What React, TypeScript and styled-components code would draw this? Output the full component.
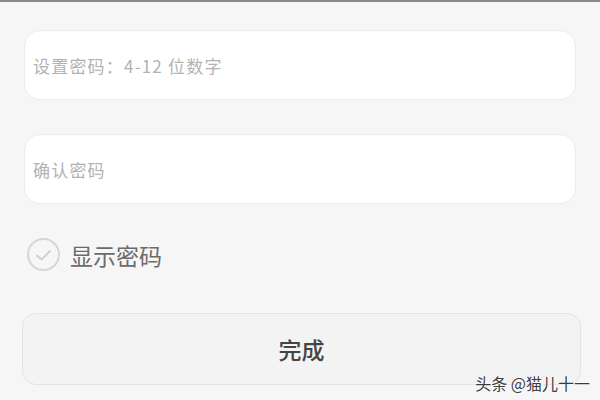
import React from 'react';
import styled, { createGlobalStyle } from 'styled-components';

const GlobalStyle = createGlobalStyle`
  html, body {
    margin: 0;
    padding: 0;
    background: #f6f6f6;
  }
  body {
    font-family: "Noto Sans CJK SC", "Noto Sans", sans-serif;
  }
`;

const Screen = styled.div`
  position: relative;
  width: 600px;
  height: 400px;
  overflow: hidden;
  background: #f6f6f6;
  border-top: 2px solid #8a8a8a;
  box-sizing: border-box;
  display: flex;
  flex-direction: column;
  padding: 28px 24px 0 24px;
`;

const Field = styled.div<{ $gap: number }>`
  height: 70px;
  margin-bottom: ${(p) => p.$gap}px;
  background: #ffffff;
  border: 1.5px solid #ebebeb;
  border-radius: 16px;
  display: flex;
  align-items: center;
  padding-left: 8px;
  box-sizing: border-box;
  font-size: 17px;
  letter-spacing: 1.2px;
  color: #b2b2b2;
`;

const CheckRow = styled.div`
  display: flex;
  align-items: center;
  gap: 10px;
  height: 33px;
  margin-bottom: 42px;
  margin-left: 3px;
`;

const CheckCircle = styled.div`
  width: 33px;
  height: 33px;
  border-radius: 50%;
  border: 2px solid #d6d6d6;
  box-sizing: border-box;
  display: flex;
  align-items: center;
  justify-content: center;
`;

const CheckLabel = styled.span`
  font-size: 23px;
  color: #6c6c6c;
`;

const DoneButton = styled.div`
  height: 72px;
  margin: 0 -5px 0 -2px;
  background: #f3f3f3;
  border: 1.5px solid #e4e4e4;
  border-radius: 14px;
  box-sizing: border-box;
  display: flex;
  align-items: center;
  justify-content: center;
  font-size: 23px;
  font-weight: 500;
  color: #444444;
`;

const Watermark = styled.div`
  position: absolute;
  right: 10px;
  bottom: 5px;
  font-size: 16px;
  color: #3c3c3c;
  text-shadow: 0 0 2px #ffffff, 0 0 2px #ffffff;
`;

export default function App() {
  return (
    <>
      <GlobalStyle />
      <Screen>
        <Field $gap={34}>设置密码：4-12 位数字</Field>
        <Field $gap={34}>确认密码</Field>
        <CheckRow>
          <CheckCircle>
            <svg width="17" height="14" viewBox="0 0 17 14">
              <path d="M2 7.5 L6.5 11.5 L15 3" fill="none" stroke="#cfcfcf" strokeWidth="1.8" strokeLinecap="round" strokeLinejoin="round" />
            </svg>
          </CheckCircle>
          <CheckLabel>显示密码</CheckLabel>
        </CheckRow>
        <DoneButton>完成</DoneButton>
        <Watermark>头条 @猫儿十一</Watermark>
      </Screen>
    </>
  );
}
